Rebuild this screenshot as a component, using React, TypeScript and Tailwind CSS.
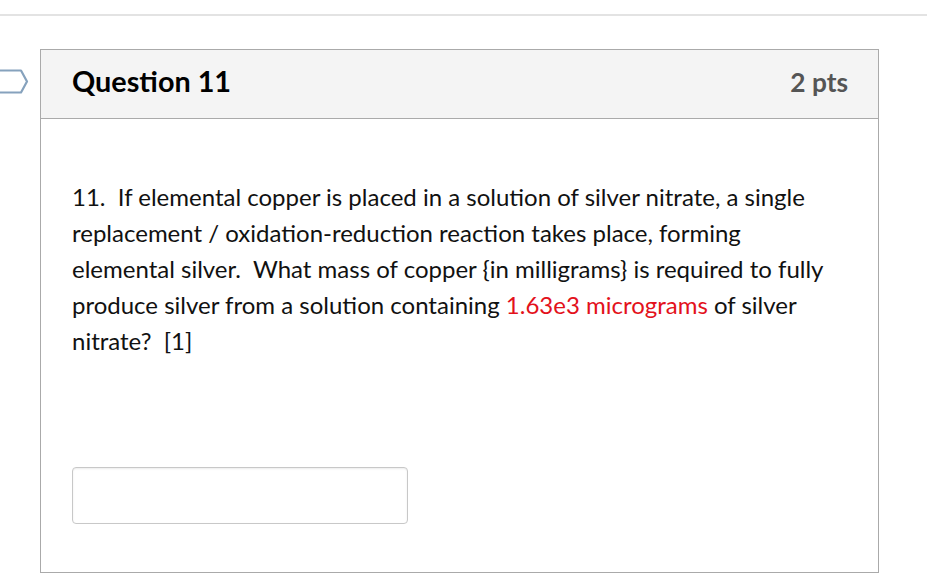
import React from "react";

export default function App() {
  return (
    <div className="w-[927px] h-[587px] bg-white overflow-hidden" style={{ fontFamily: "Lato, 'Open Sans', sans-serif" }}>
      <div className="pt-[14px]">
        <div className="h-[2px] bg-[#e3e3e3]" />
      </div>
      <div className="relative mt-[33px] ml-[40px] w-[839px] h-[524px] border border-[#aaaaaa] flex flex-col">
        {/* flag marker */}
        <svg className="absolute left-[-41px] top-[19px]" width="30" height="26" viewBox="0 0 30 26">
          <path d="M-2 1.5 H21 L27 12.5 L21 23.5 H-2 Z" fill="white" stroke="#86a2bd" strokeWidth="2.2" strokeLinejoin="round" />
        </svg>
        <div className="h-[69px] bg-[#f4f4f4] border-b border-[#aaaaaa] flex items-center justify-between pl-[31px] pr-[30px]">
          <h2 className="text-[28.8px] font-bold text-black pb-[4px]">Question 11</h2>
          <span className="text-[26.3px] font-bold text-[#555555] pb-[2px]">2 pts</span>
        </div>
        <div className="pl-[31px] pr-[46px] pt-[60px]">
          <p className="text-[24px] leading-[36px] text-[#111111]">
            11.&nbsp; If elemental copper is placed in a solution of silver nitrate, a single replacement / oxidation-reduction reaction takes place, forming elemental silver.&nbsp; What mass of copper {"{in milligrams}"} is required to fully produce silver from a solution containing <span className="text-[#e3111b]">1.63e3 micrograms</span> of silver nitrate?&nbsp; [1]
          </p>
          <div className="mt-[108px] w-[336px] h-[57px] border border-[#c8c8c8] rounded-[4px] shadow-[inset_0_1px_2px_rgba(0,0,0,0.08)]" />
        </div>
      </div>
    </div>
  );
}
